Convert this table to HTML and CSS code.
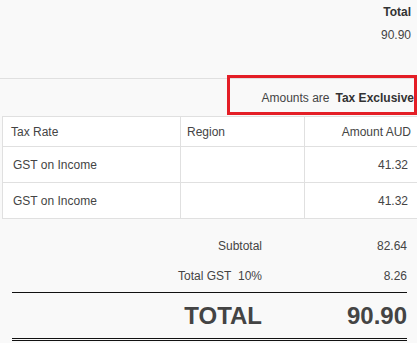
FILE: index.html
```html
<!DOCTYPE html>
<html>
<head>
<meta charset="utf-8">
<link rel="stylesheet" href="styles.css">
</head>
<body>
<div class="page">
  <div class="summary">
    <div class="summary-label">Total</div>
    <div class="summary-value">90.90</div>
  </div>
  <div class="tax-note">Amounts are<span class="tax-mode">Tax Exclusive</span></div>
  <div class="tax-table">
    <div class="row head">
      <div class="cell c1">Tax Rate</div>
      <div class="cell c2">Region</div>
      <div class="cell c3">Amount AUD</div>
    </div>
    <div class="row body">
      <div class="cell c1">GST on Income</div>
      <div class="cell c2"></div>
      <div class="cell c3">41.32</div>
    </div>
    <div class="row body">
      <div class="cell c1">GST on Income</div>
      <div class="cell c2"></div>
      <div class="cell c3">41.32</div>
    </div>
  </div>
  <div class="totals">
    <div class="line"><span class="t-label">Subtotal</span><span class="t-value">82.64</span></div>
    <div class="line"><span class="t-label">Total GST&nbsp; 10%</span><span class="t-value">8.26</span></div>
    <div class="grand"><span class="t-label">TOTAL</span><span class="t-value">90.90</span></div>
  </div>
  <div class="highlight"></div>
</div>
</body>
</html>
```
FILE: styles.css
```css
html, body {
  margin: 0;
  padding: 0;
  background: #f9f9f9;
}
body {
  font-family: "Liberation Sans", Arial, sans-serif;
  font-size: 12px;
  color: #444;
}
.page {
  position: relative;
  width: 417px;
  height: 343px;
  overflow: hidden;
}
.summary {
  box-sizing: border-box;
  height: 79px;
  padding: 4px 6px 0 0;
  text-align: right;
  border-bottom: 1px solid #e0e0e0;
}
.summary-label {
  font-weight: bold;
  color: #333;
  line-height: 16px;
}
.summary-value {
  line-height: 16px;
  margin-top: 7px;
}
.tax-note {
  height: 37px;
  display: flex;
  align-items: center;
  justify-content: flex-end;
  padding-right: 3px;
  color: #444;
}
.tax-mode {
  margin-left: 6px;
  font-weight: bold;
  color: #333;
}
.tax-table {
  margin-left: 2px;
  background: #fff;
  border-left: 1px solid #e0e0e0;
  border-top: 1px solid #e0e0e0;
}
.row {
  display: grid;
  grid-template-columns: 178px 124px 1fr;
  border-bottom: 1px solid #e0e0e0;
}
.row.head { height: 29px; }
.row.body { height: 35px; }
.cell {
  display: flex;
  align-items: center;
}
.c1, .c2 { border-right: 1px solid #e0e0e0; }
.head .c1 { padding-left: 8px; }
.head .c2 { padding-left: 6px; }
.head .c3 { justify-content: flex-end; padding-right: 6px; }
.body .c1 { padding-left: 10px; }
.body .c3 { justify-content: flex-end; padding-right: 9px; }
.totals {
  margin: 0 10px 0 12px;
  padding-top: 12px;
}
.line, .grand {
  display: grid;
  grid-template-columns: 1fr 145px;
  text-align: right;
}
.line {
  height: 30px;
  line-height: 30px;
}
.grand {
  margin-top: 1px;
  border-top: 1px solid #111;
  border-bottom: 3px double #111;
  height: 45px;
  line-height: 45px;
  font-size: 24px;
  font-weight: bold;
  color: #444;
}
.highlight {
  position: absolute;
  left: 227px;
  top: 75px;
  width: 190px;
  height: 40px;
  box-sizing: border-box;
  border: 3px solid #e41e26;
}
```
